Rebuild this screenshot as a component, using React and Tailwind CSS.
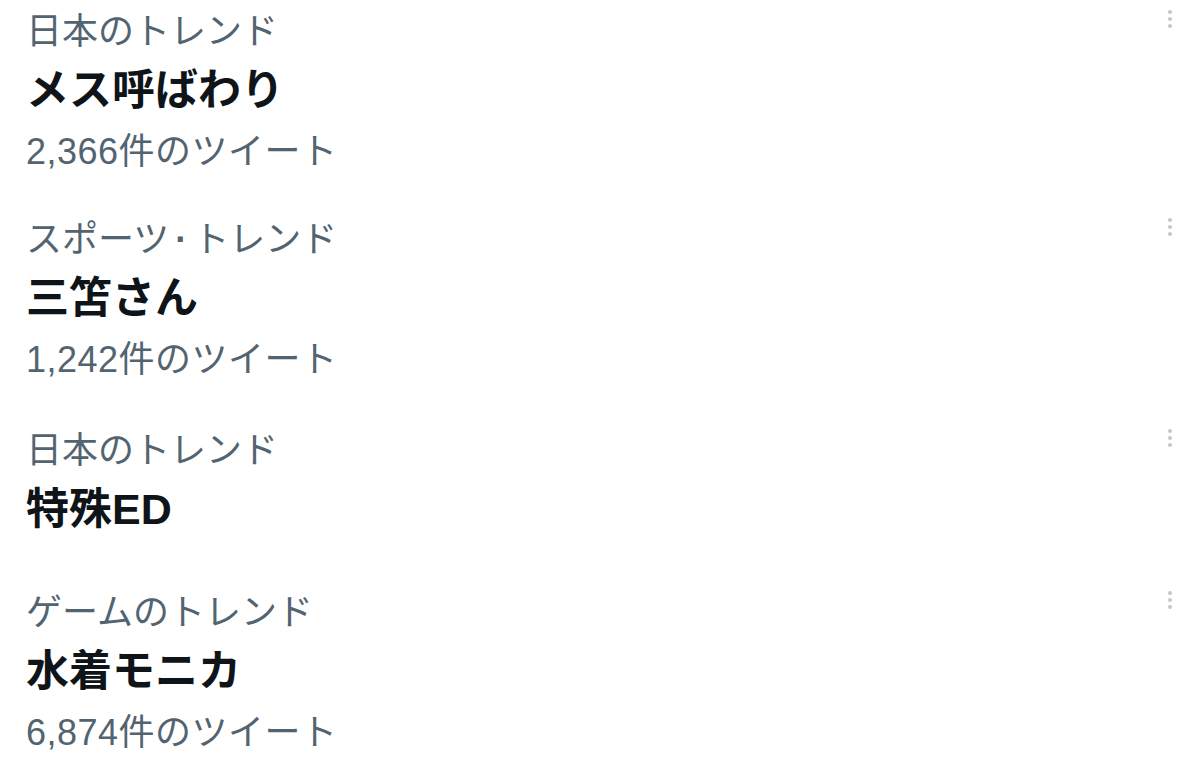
import React from "react";

const trends = [
  { id: 1, category: ["日本のトレンド"], name: "メス呼ばわり", count: "2,366件のツイート", gap: "mt-0" },
  { id: 2, category: ["スポーツ", "トレンド"], name: "三笘さん", count: "1,242件のツイート", gap: "mt-[28px]" },
  { id: 3, category: ["日本のトレンド"], name: "特殊ED", count: null, gap: "mt-[31px]" },
  { id: 4, category: ["ゲームのトレンド"], name: "水着モニカ", count: "6,874件のツイート", gap: "mt-[42px]" },
];

function MoreDots() {
  return (
    <div className="absolute right-[28px] top-[10px] flex flex-col gap-[3px]">
      <span className="block w-[4px] h-[4px] rounded-full bg-[#c2c7cb]" />
      <span className="block w-[4px] h-[4px] rounded-full bg-[#c2c7cb]" />
      <span className="block w-[4px] h-[4px] rounded-full bg-[#c2c7cb]" />
    </div>
  );
}

function Category({ parts }) {
  return (
    <div className="h-[60px] pt-[4px] text-[36px] leading-[56px] text-[#536471]">
      {parts.map((p, i) => (
        <React.Fragment key={i}>
          {i > 0 && <span className="mx-[6px] font-bold">·</span>}
          {p}
        </React.Fragment>
      ))}
    </div>
  );
}

function TrendItem({ trend }) {
  return (
    <div className={`relative ${trend.gap}`}>
      <Category parts={trend.category} />
      <div className="h-[60px] text-[43px] leading-[60px] font-bold text-[#0f1419]">{trend.name}</div>
      {trend.count && (
        <div className="h-[60px] pt-[4px] text-[36px] leading-[56px] tracking-[0.5px] text-[#536471]">
          {trend.count}
        </div>
      )}
      <MoreDots />
    </div>
  );
}

export default function App() {
  return (
    <div
      className="w-[1200px] h-[771px] bg-white pl-[26px] overflow-hidden"
      style={{ fontFamily: '"Liberation Sans", "Noto Sans CJK JP", sans-serif' }}
    >
      {trends.map((t) => (
        <TrendItem key={t.id} trend={t} />
      ))}
    </div>
  );
}
